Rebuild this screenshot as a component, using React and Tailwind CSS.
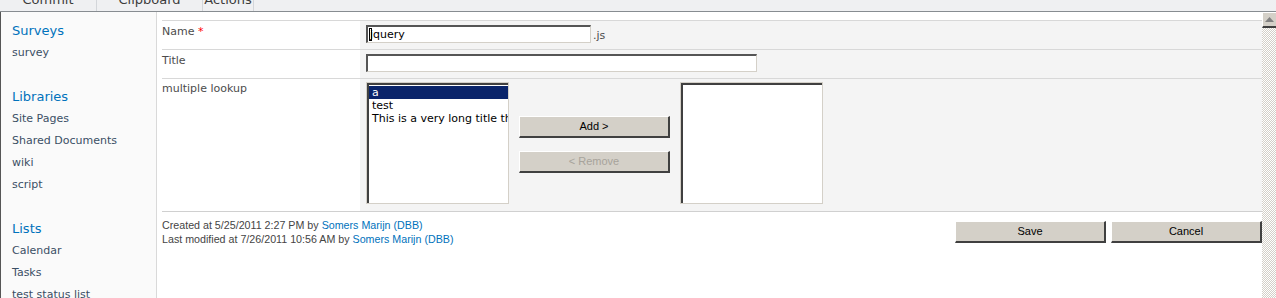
import React from "react";

const dv = { fontFamily: '"DejaVu Sans", Verdana, sans-serif' };
const ls = { fontFamily: '"Liberation Sans", Tahoma, Arial, sans-serif' };

function Btn({ children, disabled, className = "" }) {
  return (
    <div
      className={
        "flex items-center justify-center h-[22px] w-[151px] bg-[#d4d0c8] border-t border-l border-t-white border-l-white border-b-2 border-r-2 border-b-[#404040] border-r-[#404040] text-[11px] " +
        (disabled ? "text-[#a7a39b] " : "text-black ") +
        className
      }
      style={ls}
    >
      {children}
    </div>
  );
}

function ListBox({ items = [] }) {
  return (
    <div className="w-[143px] h-[122px] border border-[#d4d0c8] bg-white">
      <div className="w-full h-full border-t-2 border-l-2 border-t-[#404040] border-l-[#404040] overflow-hidden pt-[1px]">
        {items.map((it, i) => (
          <div
            key={i}
            className={
              "h-[13px] leading-[13px] text-[11px] pl-[3px] whitespace-nowrap " +
              (i === 0 ? "bg-[#0a246a] text-white" : "text-black")
            }
            style={dv}
          >
            {it}
          </div>
        ))}
      </div>
    </div>
  );
}

function NavHead({ children, className = "" }) {
  return (
    <div className={"h-[22px] flex items-center text-[13px] text-[#0072bc] " + className} style={dv}>
      {children}
    </div>
  );
}
function NavItem({ children }) {
  return (
    <div className="h-[22px] flex items-center text-[11px] text-[#3b4f65] whitespace-nowrap" style={dv}>
      {children}
    </div>
  );
}

export default function App() {
  return (
    <div className="w-[1276px] h-[298px] overflow-hidden flex flex-col bg-white">
      {/* top ribbon tabs (clipped) */}
      <div className="h-[12px] shrink-0 flex bg-[#eff0f2] border-b border-[#878c91] overflow-hidden">
        {[
          ["Commit", "w-[97px]"],
          ["Clipboard", "w-[106px]"],
          ["Actions", "w-[51px]"],
        ].map(([t, w]) => (
          <div key={t} className={w + " h-full flex justify-center border-r border-[#d3d6da]"}>
            <span className="text-[13px] leading-[13px] mt-[-7px] text-[#3c3c3c]" style={dv}>
              {t}
            </span>
          </div>
        ))}
      </div>

      <div className="flex flex-1 min-h-0">
        {/* left nav */}
        <div className="w-[157px] shrink-0 bg-[#fafafa] border-l border-l-[#555] border-r border-r-[#d9d9d9] pl-[11px] pt-[8px] overflow-hidden">
          <NavHead>Surveys</NavHead>
          <NavItem>survey</NavItem>
          <NavHead className="mt-[22px]">Libraries</NavHead>
          <NavItem>Site Pages</NavItem>
          <NavItem>Shared Documents</NavItem>
          <NavItem>wiki</NavItem>
          <NavItem>script</NavItem>
          <NavHead className="mt-[22px]">Lists</NavHead>
          <NavItem>Calendar</NavItem>
          <NavItem>Tasks</NavItem>
          <NavItem>test status list</NavItem>
        </div>

        {/* main */}
        <div className="flex-1 min-w-0 pl-[5px] pt-[8px]">
          <div className="border-t border-[#d8d8d8]">
            {/* Name */}
            <div className="grid grid-cols-[198px_1fr] h-[29px] border-b border-[#d8d8d8]">
              <div className="pt-[4px] text-[11px] leading-[14px] text-[#4c4c4c]" style={dv}>
                Name <span className="text-[#ff0000]">*</span>
              </div>
              <div className="bg-[#f4f4f4] pl-[6px] pt-[4px] flex items-start">
                <div className="w-[225px] h-[18px] bg-white border-t-2 border-l-2 border-t-[#555] border-l-[#555] border-b border-r border-b-[#d4d0c8] border-r-[#d4d0c8] flex items-center pl-[1px]">
                  <span className="w-[3px] h-[13px] border border-black shrink-0" />
                  <span className="text-[11px] text-black leading-[13px] ml-[-2px]" style={dv}>
                    jquery
                  </span>
                </div>
                <span className="text-[11px] leading-[14px] text-[#4c4c4c] ml-[2px] mt-[4px]" style={dv}>
                  .js
                </span>
              </div>
            </div>
            {/* Title */}
            <div className="grid grid-cols-[198px_1fr] h-[29px] border-b border-[#d8d8d8]">
              <div className="pt-[4px] text-[11px] leading-[14px] text-[#4c4c4c]" style={dv}>
                Title
              </div>
              <div className="bg-[#f4f4f4] pl-[6px] pt-[4px]">
                <div className="w-[391px] h-[18px] bg-white border-t-2 border-l-2 border-t-[#555] border-l-[#555] border-b border-r border-b-[#d4d0c8] border-r-[#d4d0c8]" />
              </div>
            </div>
            {/* multiple lookup */}
            <div className="grid grid-cols-[198px_1fr] h-[133px] border-b border-[#d0d0d0]">
              <div className="pt-[3px] text-[11px] leading-[14px] text-[#4c4c4c]" style={dv}>
                multiple lookup
              </div>
              <div className="bg-[#f4f4f4] pl-[6px] pt-[3px] flex items-start">
                <ListBox items={["a", "test", "This is a very long title that is cut"]} />
                <div className="ml-[10px] mr-[10px] pt-[34px] flex flex-col gap-[13px]">
                  <Btn>Add &gt;</Btn>
                  <Btn disabled>&lt; Remove</Btn>
                </div>
                <ListBox items={[]} />
              </div>
            </div>
          </div>

          {/* footer */}
          <div className="flex justify-between pt-[6px]">
            <div className="text-[10.7px] leading-[14px] text-[#444]" style={ls}>
              <div>
                Created at 5/25/2011 2:27 PM by <span className="text-[#0072bc]">Somers Marijn (DBB)</span>
              </div>
              <div>
                Last modified at 7/26/2011 10:56 AM by <span className="text-[#0072bc]">Somers Marijn (DBB)</span>
              </div>
            </div>
            <div className="flex gap-[5px] pt-[3px]">
              <Btn>Save</Btn>
              <Btn>Cancel</Btn>
            </div>
          </div>
        </div>

        {/* scrollbar */}
        <div className="w-[14px] shrink-0 flex flex-col">
          <div className="h-[16px] bg-[#d4d0c8] border-t border-l border-t-white border-l-white border-b-2 border-b-[#404040] flex items-center justify-center">
            <svg width="9" height="5" viewBox="0 0 9 5">
              <path d="M4.5 0 L9 5 L0 5 Z" fill="#808080" />
            </svg>
          </div>
          <div className="flex-1 bg-[repeating-conic-gradient(#d4d0c8_0_25%,#ffffff_0_50%)] bg-[length:2px_2px]" />
        </div>
      </div>
    </div>
  );
}
